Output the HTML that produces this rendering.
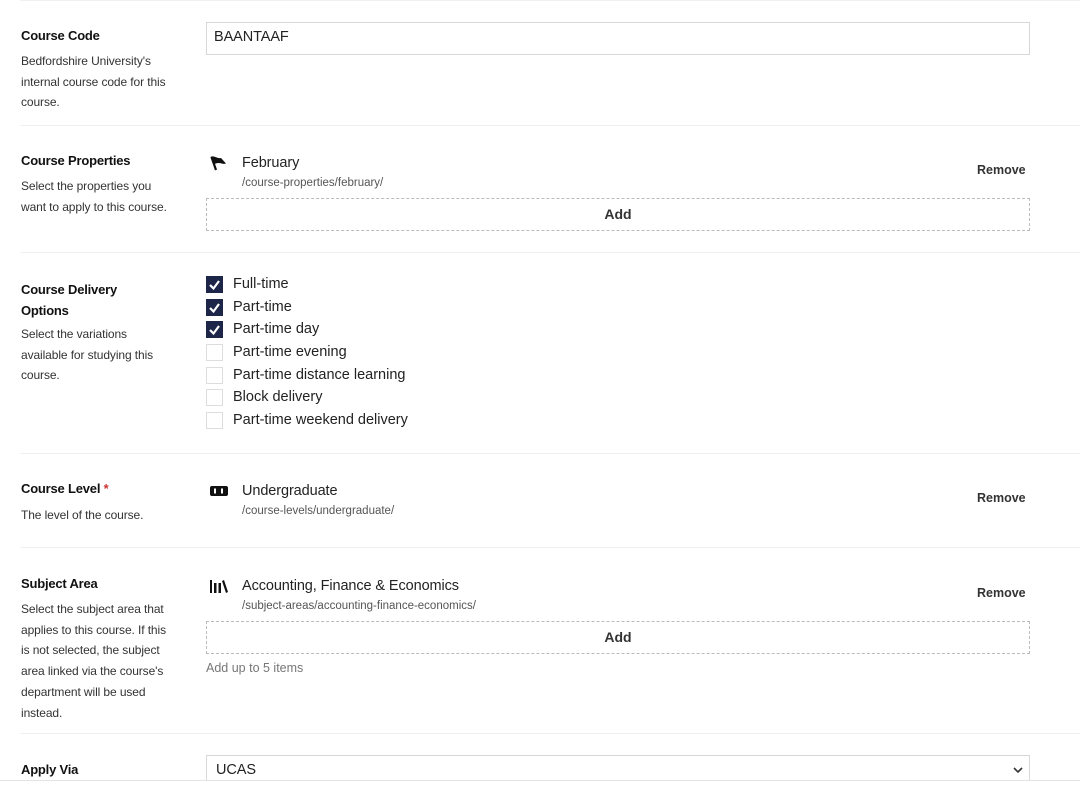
<!DOCTYPE html><html><head><style>
html,body{margin:0;width:1080px;height:789px;overflow:hidden}
body{background:#fff;font-family:"Liberation Sans",sans-serif;color:#1b1b1b;position:relative}
.a{position:absolute;white-space:nowrap}
.h{font-size:13px;font-weight:bold;color:#111;letter-spacing:-0.2px}
.d{font-size:12px;color:#333;line-height:20.7px;letter-spacing:-0.1px}
.sep{position:absolute;left:20px;right:0;height:1px;background:#f0f0f0}
.box{position:absolute;border:1px solid #d8d8d8;background:#fff}
.dash{position:absolute;border:1px dashed #bbb;text-align:center;font-size:14px;font-weight:bold;color:#333;line-height:30px}
.t{font-size:14.5px;color:#222;letter-spacing:-0.1px}
.p{font-size:11.5px;color:#555}
.rm{font-size:12.5px;font-weight:bold;color:#333}
.cb{position:absolute;left:206px;width:17px;height:17px;box-sizing:border-box;border:1px solid #ddd}
.cb.on{background:#1d2549;border-color:#1d2549}
.cl{position:absolute;left:233px;font-size:14.5px;color:#222;white-space:nowrap}
</style></head><body>
<div class="sep" style="top:0"></div>
<div class="a h" style="left:21px;top:28px">Course Code</div>
<div class="a d" style="left:21px;top:51px">Bedfordshire University's<br>internal course code for this<br>course.</div>
<div class="box" style="left:206px;top:22px;width:822px;height:31px"></div>
<div class="a t" style="left:214px;top:29px">BAANTAAF</div>
<div class="sep" style="top:125px"></div>

<div class="a h" style="left:21px;top:153px">Course Properties</div>
<div class="a d" style="left:21px;top:176px">Select the properties you<br>want to apply to this course.</div>
<svg class="a" style="left:209px;top:155px" width="20" height="18" viewBox="0 0 20 18"><path d="M2.5 2 L7 15" stroke="#111" stroke-width="2.2"/><path d="M1.5 2 C5 0 8 4 12 3 L17 8.5 C13 10 10 6 5 9.5 Z" fill="#111"/></svg>
<div class="a t" style="left:242px;top:155px">February</div>
<div class="a p" style="left:242px;top:177px">/course-properties/february/</div>
<div class="a rm" style="left:977px;top:163px">Remove</div>
<div class="dash" style="left:206px;top:198px;width:822px;height:31px">Add</div>
<div class="sep" style="top:252px"></div>

<div class="a h" style="left:21px;top:279px;line-height:21px">Course Delivery<br>Options</div>
<div class="a d" style="left:21px;top:324px">Select the variations<br>available for studying this<br>course.</div>
<div class="cb on" style="top:276px"></div><div class="cl" style="top:276px">Full-time</div>
<div class="cb on" style="top:299px"></div><div class="cl" style="top:299px">Part-time</div>
<div class="cb on" style="top:321px"></div><div class="cl" style="top:321px">Part-time day</div>
<div class="cb" style="top:344px"></div><div class="cl" style="top:344px">Part-time evening</div>
<div class="cb" style="top:367px"></div><div class="cl" style="top:367px">Part-time distance learning</div>
<div class="cb" style="top:389px"></div><div class="cl" style="top:389px">Block delivery</div>
<div class="cb" style="top:412px"></div><div class="cl" style="top:412px">Part-time weekend delivery</div>
<svg class="a" style="left:206px;top:276px" width="17" height="70" viewBox="0 0 17 70"><g fill="none" stroke="#fff" stroke-width="2.2"><path d="M4 9 L7.5 12.5 L13 5"/><path d="M4 32 L7.5 35.5 L13 28"/><path d="M4 54 L7.5 57.5 L13 50"/></g></svg>
<div class="sep" style="top:453px"></div>

<div class="a h" style="left:21px;top:481px">Course Level <span style="color:#c33">*</span></div>
<div class="a d" style="left:21px;top:505px">The level of the course.</div>
<svg class="a" style="left:210px;top:486px" width="18" height="10"><rect x="0" y="0" width="18" height="10" rx="2" fill="#111"/><rect x="4" y="2.5" width="2" height="5" fill="#fff"/><rect x="11" y="2.5" width="2" height="5" fill="#fff"/></svg>
<div class="a t" style="left:242px;top:483px">Undergraduate</div>
<div class="a p" style="left:242px;top:505px">/course-levels/undergraduate/</div>
<div class="a rm" style="left:977px;top:491px">Remove</div>
<div class="sep" style="top:547px"></div>

<div class="a h" style="left:21px;top:576px">Subject Area</div>
<div class="a d" style="left:21px;top:599px">Select the subject area that<br>applies to this course. If this<br>is not selected, the subject<br>area linked via the course's<br>department will be used<br>instead.</div>
<svg class="a" style="left:210px;top:580px" width="18" height="13"><g fill="#111"><rect x="0" y="0" width="2" height="13"/><rect x="4" y="3" width="2.5" height="10"/><rect x="8.5" y="3" width="2.5" height="10"/><path d="M12 1 L14 0 L18 12 L16 13Z"/></g></svg>
<div class="a t" style="left:242px;top:578px">Accounting, Finance &amp; Economics</div>
<div class="a p" style="left:242px;top:600px">/subject-areas/accounting-finance-economics/</div>
<div class="a rm" style="left:977px;top:586px">Remove</div>
<div class="dash" style="left:206px;top:621px;width:822px;height:31px">Add</div>
<div class="a" style="left:206px;top:661px;font-size:12.5px;color:#777">Add up to 5 items</div>
<div class="sep" style="top:733px"></div>

<div class="a h" style="left:21px;top:762px">Apply Via</div>
<div class="box" style="left:206px;top:755px;width:822px;height:40px"></div>
<div class="a t" style="left:216px;top:762px">UCAS</div>
<svg class="a" style="left:1013px;top:767px" width="10" height="7"><path d="M1 1 L5 5 L9 1" fill="none" stroke="#333" stroke-width="1.6"/></svg>
<div style="position:absolute;left:0;right:0;top:780px;height:9px;background:#fff;border-top:1px solid #e4e4e4"></div>
</body></html>
